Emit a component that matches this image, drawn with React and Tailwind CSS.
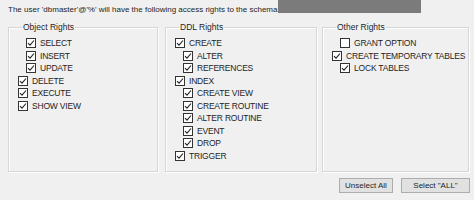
import React from "react";

function Box({ checked }) {
  return (
    <span className="w-[10px] h-[10px] border border-[#333] bg-white flex items-center justify-center shrink-0">
      {checked && (
        <svg width="8" height="8" viewBox="0 0 8 8">
          <path d="M1 4.2 L3 6.2 L7 1.5" fill="none" stroke="#222" strokeWidth="1.1" />
        </svg>
      )}
    </span>
  );
}

function Row({ label, level = 0, checked = true }) {
  return (
    <div className={"h-[12.5px] flex items-center gap-[4px] whitespace-nowrap " + (level ? "pl-[8px]" : "")}>
      <Box checked={checked} />
      <span className="leading-none text-[8.5px] tracking-[-0.2px]">{label}</span>
    </div>
  );
}

function Group({ title, className, children }) {
  return (
    <fieldset className={"box-border shrink-0 min-w-0 border border-[#d6d6d6] shadow-[inset_1px_1px_0_#fff,1px_1px_0_#fff] h-[151px] px-[9px] " + className}>
      <legend className="px-[1px] ml-[4px] leading-[12px] text-[8.5px]">{title}</legend>
      <div className="pt-[4px] flex flex-col">{children}</div>
    </fieldset>
  );
}

export default function App() {
  return (
    <div
      className="w-[474px] h-[200px] bg-[#f0f0f0] text-[#1e1e1e] text-[8px] overflow-hidden"
      style={{ fontFamily: '"Liberation Sans", Arial, sans-serif' }}
    >
      <div className="flex h-[14px] pl-[8px]">
        <span className="self-end leading-[10px] mb-[-1px] whitespace-nowrap">
          The user 'dbmaster'@'%' will have the following access rights to the schema
        </span>
        <span className="ml-[1px] w-[143px] h-[13px] bg-[#7b7b7b]" />
      </div>
      <div className="flex mt-[7px] pl-[8px]">
        <Group title="Object Rights" className="w-[150px]">
          <Row label="SELECT" level={1} />
          <Row label="INSERT" level={1} />
          <Row label="UPDATE" level={1} />
          <Row label="DELETE" />
          <Row label="EXECUTE" />
          <Row label="SHOW VIEW" />
        </Group>
        <Group title="DDL Rights" className="w-[152px] ml-[7px]">
          <Row label="CREATE" />
          <Row label="ALTER" level={1} />
          <Row label="REFERENCES" level={1} />
          <Row label="INDEX" />
          <Row label="CREATE VIEW" level={1} />
          <Row label="CREATE ROUTINE" level={1} />
          <Row label="ALTER ROUTINE" level={1} />
          <Row label="EVENT" level={1} />
          <Row label="DROP" level={1} />
          <Row label="TRIGGER" />
        </Group>
        <Group title="Other Rights" className="w-[147px] ml-[5px]">
          <Row label="GRANT OPTION" level={1} checked={false} />
          <Row label="CREATE TEMPORARY TABLES" />
          <Row label="LOCK TABLES" level={1} />
        </Group>
      </div>
      <div className="flex justify-end gap-[8px] pr-[4px] mt-[6px]">
        <button className="w-[54px] h-[15px] bg-[#e1e1e1] border border-[#adadad] leading-none">
          Unselect All
        </button>
        <button className="w-[69px] h-[15px] bg-[#e1e1e1] border border-[#adadad] leading-none">
          Select "ALL"
        </button>
      </div>
    </div>
  );
}
